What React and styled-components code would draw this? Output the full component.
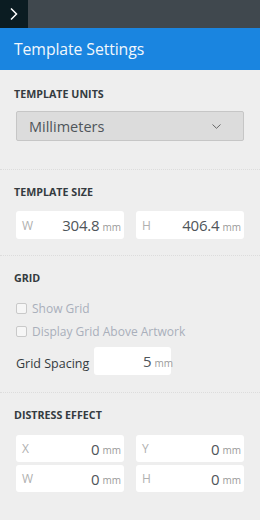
import React from "react";
import styled, { createGlobalStyle } from "styled-components";

const Global = createGlobalStyle`
  html, body { margin: 0; padding: 0; background: #eeeeee; }
  body { font-family: "Open Sans", "Noto Sans", sans-serif; }
  * { box-sizing: border-box; }
`;

const Panel = styled.div`
  width: 260px;
  height: 520px;
  background: #eeeeee;
  display: flex;
  flex-direction: column;
  overflow: hidden;
`;

const TopBar = styled.div`
  height: 28px;
  background: #40484e;
  display: flex;
`;

const CollapseButton = styled.div`
  width: 28px;
  height: 28px;
  background: #0b1c22;
  display: flex;
  align-items: center;
  justify-content: center;
`;

const Header = styled.div`
  height: 42px;
  background: #1a85e0;
  color: #f2f7fc;
  font-size: 15.8px;
  padding-left: 14px;
  display: flex;
  align-items: center;
  letter-spacing: -0.1px;
`;

const Section = styled.div`
  padding: ${(p) => p.$pt}px 16px ${(p) => p.$pb}px 16px;
  border-top: ${(p) => (p.$sep ? "1px dotted #dcdcdc" : "none")};
  display: flex;
  flex-direction: column;
`;

const Heading = styled.div`
  font-size: 10.7px;
  line-height: 16px;
  font-weight: 700;
  color: #343b40;
  margin-left: -2px;
  margin-bottom: ${(p) => p.$mb}px;
`;

const Select = styled.div`
  height: 30px;
  background: #dcdcdc;
  border: 1px solid #c6c6c6;
  border-radius: 2px;
  display: flex;
  align-items: center;
  justify-content: space-between;
  padding: 0 22px 0 12px;
  font-size: 14.5px;
  color: #4f555a;
`;

const FieldGrid = styled.div`
  display: grid;
  grid-template-columns: 1fr 1fr;
  column-gap: 12px;
  row-gap: 3px;
`;

const Field = styled.div`
  height: ${(p) => p.$h}px;
  width: ${(p) => (p.$w ? `${p.$w}px` : "auto")};
  flex-shrink: 0;
  background: #ffffff;
  border-radius: 3px;
  display: flex;
  align-items: center;
  padding: 0 3px 0 6px;
`;

const FieldLabel = styled.span`
  font-size: 12px;
  color: #b0b0b0;
  flex: 1;
`;

const FieldValue = styled.span`
  font-size: 15px;
  color: #4f555a;
  letter-spacing: -0.2px;
`;

const Unit = styled.span`
  font-size: 10px;
  color: #9a9a9a;
  margin-left: 3px;
  margin-right: ${(p) => (p.$over ? -5 : 0)}px;
  padding-top: 3px;
`;

const CheckRow = styled.label`
  height: 23px;
  display: flex;
  align-items: center;
  gap: 5px;
  font-size: 12px;
  color: #a9afbb;
`;

const CheckBox = styled.span`
  width: 11px;
  height: 11px;
  border: 1px solid #c9c9c9;
  border-radius: 2px;
  background: #f6f6f6;
`;

const SpacingRow = styled.div`
  margin-top: 4px;
  display: flex;
  align-items: center;
`;

const SpacingLabel = styled.span`
  font-size: 12.5px;
  color: #343b40;
  width: 78px;
  flex-shrink: 0;
  white-space: nowrap;
  padding-top: 4px;
`;

const ValueInput = ({ label, value, h = 28, w, over }) => (
  <Field $h={h} $w={w}>
    <FieldLabel>{label}</FieldLabel>
    <FieldValue>{value}</FieldValue>
    <Unit $over={over}>mm</Unit>
  </Field>
);

export default function App() {
  return (
    <Panel>
      <Global />
      <TopBar>
        <CollapseButton>
          <svg width="10" height="14" viewBox="0 0 10 14">
            <path d="M2 1.5 L7.5 7 L2 12.5" fill="none" stroke="#ffffff" strokeWidth="1.5" />
          </svg>
        </CollapseButton>
      </TopBar>
      <Header>Template Settings</Header>

      <Section $pt={16} $pb={28}>
        <Heading $mb={9}>TEMPLATE UNITS</Heading>
        <Select>
          <span>Millimeters</span>
          <svg width="9" height="5" viewBox="0 0 9 5">
            <path d="M0.5 0.5 L4.5 4.3 L8.5 0.5" fill="none" stroke="#666" strokeWidth="1" />
          </svg>
        </Select>
      </Section>

      <Section $sep $pt={14} $pb={16}>
        <Heading $mb={11}>TEMPLATE SIZE</Heading>
        <FieldGrid>
          <ValueInput label="W" value="304.8" />
          <ValueInput label="H" value="406.4" />
        </FieldGrid>
      </Section>

      <Section $sep $pt={14} $pb={17}>
        <Heading $mb={11}>GRID</Heading>
        <CheckRow>
          <CheckBox />
          Show Grid
        </CheckRow>
        <CheckRow>
          <CheckBox />
          Display Grid Above Artwork
        </CheckRow>
        <SpacingRow>
          <SpacingLabel>Grid Spacing</SpacingLabel>
          <ValueInput label="" value="5" w={77} over />
        </SpacingRow>
      </Section>

      <Section $sep $pt={14} $pb={16}>
        <Heading $mb={12}>DISTRESS EFFECT</Heading>
        <FieldGrid>
          <ValueInput label="X" value="0" h={27} />
          <ValueInput label="Y" value="0" h={27} />
          <ValueInput label="W" value="0" h={27} />
          <ValueInput label="H" value="0" h={27} />
        </FieldGrid>
      </Section>
    </Panel>
  );
}
